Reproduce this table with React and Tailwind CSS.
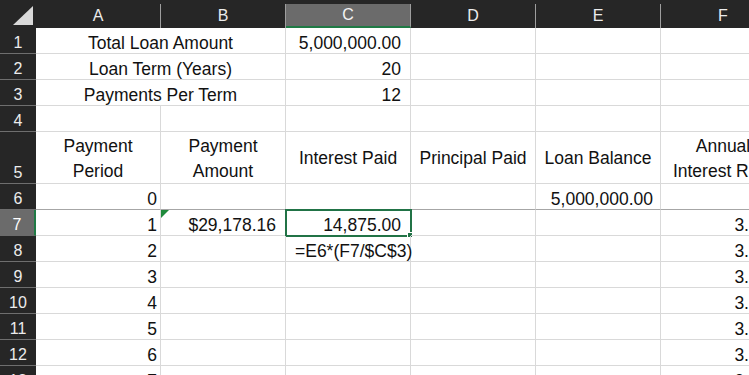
import React from 'react';

const COLS = ['A', 'B', 'C', 'D', 'E', 'F'];
const RATE = '3.57%';

// one grid cell, 125px wide unless merged
function Cell({ w = 'w-[125px]', className = '', children }) {
  return (
    <div className={`${w} shrink-0 h-full border-r border-b border-[#d9d9d9] flex relative overflow-visible whitespace-nowrap ${className}`}>
      {children}
    </div>
  );
}

function RowHead({ n, selected }) {
  return (
    <div
      className={`w-[36px] shrink-0 h-full flex items-end justify-center leading-[20px] text-[16px] border-b ${
        selected
          ? 'bg-[#6b6b6b] text-white border-[#6b6b6b] border-r-2 border-r-[#1f7a45]'
          : 'bg-[#262626] text-[#ececec] border-[#6e6e6e]'
      }`}
    >
      {n}
    </div>
  );
}

function Row({ n, h = 'h-[26px]', selected, children }) {
  return (
    <div className={`flex ${h}`}>
      <RowHead n={n} selected={selected} />
      {children}
    </div>
  );
}

const num = 'items-end justify-end leading-[20px]';
const mid = 'items-end justify-center leading-[20px]';

export default function App() {
  return (
    <div
      className="w-[749px] h-[375px] overflow-hidden bg-white text-[17.5px] text-[#111]"
      style={{ fontFamily: '"Liberation Sans", Arial, sans-serif' }}
    >
      {/* column header */}
      <div className="flex h-[28px] bg-[#262626] items-end">
        <div className="w-[36px] shrink-0 h-full flex items-end justify-end pr-[2px] pb-[2px]">
          <svg width="21" height="20" viewBox="0 0 21 20">
            <polygon points="20,0 20,19 0,19" fill="#d9d9d9" />
          </svg>
        </div>
        {COLS.map(c => (
          <div
            key={c}
            className={`w-[125px] shrink-0 h-[24px] flex items-center justify-center text-[16px] border-r border-[#9e9e9e] ${
              c === 'C'
                ? 'bg-[#6b6b6b] text-[#f4f4f4] border-b-2 border-b-[#1f7a45]'
                : 'text-[#ececec]'
            }`}
          >
            {c}
          </div>
        ))}
      </div>

      <Row n={1}>
        <Cell w="w-[250px]" className={mid}>Total Loan Amount</Cell>
        <Cell className={`${num} pr-[9px]`}>5,000,000.00</Cell>
        <Cell /><Cell /><Cell />
      </Row>
      <Row n={2}>
        <Cell w="w-[250px]" className={mid}>Loan Term (Years)</Cell>
        <Cell className={`${num} pr-[9px]`}>20</Cell>
        <Cell /><Cell /><Cell />
      </Row>
      <Row n={3}>
        <Cell w="w-[250px]" className={mid}>Payments Per Term</Cell>
        <Cell className={`${num} pr-[9px]`}>12</Cell>
        <Cell /><Cell /><Cell />
      </Row>
      <Row n={4}>
        <Cell /><Cell /><Cell /><Cell /><Cell /><Cell />
      </Row>
      <Row n={5} h="h-[52px]">
        {[
          ['Payment', 'Period'],
          ['Payment', 'Amount'],
          ['Interest Paid'],
          ['Principal Paid'],
          ['Loan Balance'],
          ['Annual', 'Interest Rate'],
        ].map((lines, i) => (
          <Cell key={i} className="flex-col items-center justify-center leading-[25px] pt-[2px]">
            {lines.map(l => <span key={l}>{l}</span>)}
          </Cell>
        ))}
      </Row>
      <Row n={6}>
        <Cell className={`${num} pr-[3px] border-b-[#a6a6a6]`}>0</Cell>
        <Cell className="border-b-[#a6a6a6]" />
        <Cell className="border-b-[#a6a6a6]" />
        <Cell className="border-b-[#a6a6a6]" />
        <Cell className={`${num} pr-[7px] border-b-[#a6a6a6]`}>5,000,000.00</Cell>
        <Cell className="border-b-[#a6a6a6]" />
      </Row>
      <Row n={7} selected>
        <Cell className={`${num} pr-[3px]`}>1</Cell>
        <Cell className={`${num} pr-[9px]`}>
          <svg className="absolute left-0 top-0" width="8" height="8" viewBox="0 0 8 8">
            <polygon points="0,0 8,0 0,8" fill="#1f8a3c" />
          </svg>
          $29,178.16
        </Cell>
        <Cell className={`${num} pr-[9px]`}>
          <div className="absolute -left-[1px] -top-[1px] w-[127px] h-[28px] border-2 border-[#217346]" />
          <div className="absolute -right-[3px] -bottom-[3px] w-[6px] h-[6px] bg-[#217346] border border-white" />
          14,875.00
        </Cell>
        <Cell /><Cell />
        <Cell className={`${num} pr-[1px]`}>{RATE}</Cell>
      </Row>
      <Row n={8}>
        <Cell className={`${num} pr-[3px]`}>2</Cell>
        <Cell />
        <Cell className="items-end justify-start pl-[9px] leading-[20px] z-10">=E6*(F7/$C$3)</Cell>
        <Cell /><Cell />
        <Cell className={`${num} pr-[1px]`}>{RATE}</Cell>
      </Row>
      {[3, 4, 5, 6, 7].map((v, i) => (
        <Row key={v} n={9 + i}>
          <Cell className={`${num} pr-[3px]`}>{v}</Cell>
          <Cell /><Cell /><Cell /><Cell />
          <Cell className={`${num} pr-[1px]`}>{RATE}</Cell>
        </Row>
      ))}
    </div>
  );
}
